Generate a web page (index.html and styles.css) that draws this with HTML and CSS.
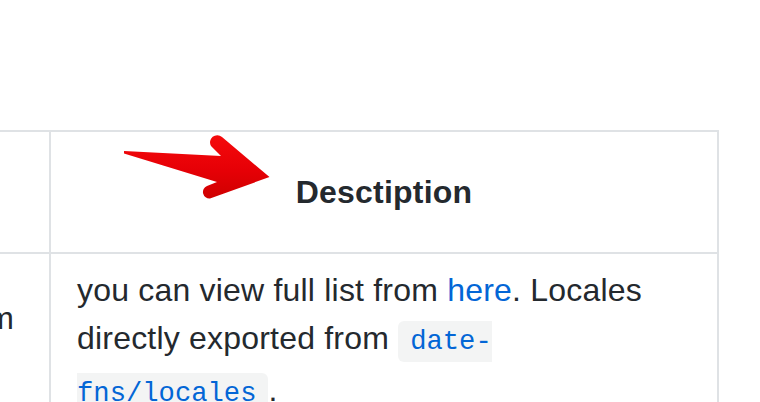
FILE: index.html
```html
<!DOCTYPE html>
<html>
<head>
<meta charset="utf-8">
<link rel="stylesheet" href="styles.css">
</head>
<body>
<div class="page">
  <table class="props">
    <colgroup><col class="col-name"><col class="col-desc"></colgroup>
    <thead>
      <tr><th>Locale<br>Object</th><th class="desc">Desctiption</th></tr>
    </thead>
    <tbody>
      <tr>
        <td>Locale object from date-fns</td>
        <td class="desc">you can view full list from <a href="#">here</a>. Locales directly exported from <a href="#"><code>date-fns/locales</code></a>.</td>
      </tr>
    </tbody>
  </table>
  <svg class="arrow" viewBox="120 130 155 72" width="155" height="72" aria-hidden="true">
    <defs>
      <linearGradient id="ag" x1="0" y1="0" x2="0" y2="1">
        <stop offset="0" stop-color="#f50a0c"/>
        <stop offset="0.55" stop-color="#e60006"/>
        <stop offset="1" stop-color="#cf0000"/>
      </linearGradient>
    </defs>
    <path d="M124,151 L221,156 L211,146 A7.2 7.2 0 0 1 222,137 L269.5,177 L210,198.5 A6.5 6.5 0 0 1 207,186 L217,182 L124,153.5 Z" fill="url(#ag)"/>
  </svg>
</div>
</body>
</html>
```
FILE: styles.css
```css
html, body {
  margin: 0;
  background: #fff;
}
body {
  font-family: "Liberation Sans", Arial, sans-serif;
  color: #24292e;
}
.page {
  position: relative;
  padding-top: 130px;
}
.props {
  border-collapse: collapse;
  table-layout: fixed;
  width: 996px;
  margin-left: -279px;
}
.col-name { width: 328px; }
.col-desc { width: 668px; }
.props th,
.props td {
  border: 2px solid #dfe2e5;
  padding: 12px 26px;
  font-size: 32px;
  line-height: 48px;
  letter-spacing: 0.2px;
  vertical-align: middle;
}
.props td.desc {
  padding-right: 36px;
}
.props th {
  font-weight: bold;
  text-align: center;
}
.props td {
  text-align: left;
}
.props a {
  color: #0366d6;
  text-decoration: none;
}
.props code {
  font-family: "Liberation Mono", "DejaVu Sans Mono", monospace;
  font-size: 27.2px;
  letter-spacing: 0;
  padding: 5px 12px;
  background: rgba(27, 31, 35, 0.05);
  border-radius: 6px;
}
.arrow {
  position: absolute;
  left: 120px;
  top: 130px;
}
```
